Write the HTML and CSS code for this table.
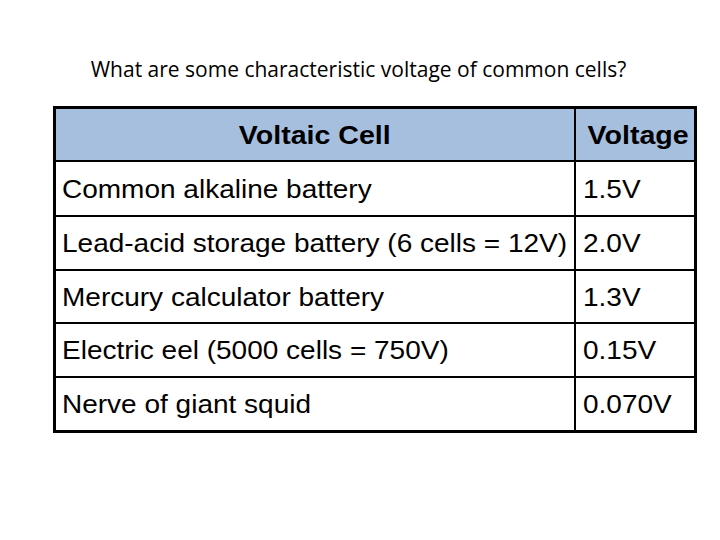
FILE: index.html
```html
<!DOCTYPE html>
<html>
<head>
<meta charset="utf-8">
<link rel="stylesheet" href="styles.css">
</head>
<body>
<main class="slide">
  <h1 class="title">What are some characteristic voltage of common cells?</h1>
  <table class="cells">
    <thead>
      <tr class="r-head">
        <th class="c-name"><span class="txt">Voltaic Cell</span></th>
        <th class="c-volt"><span class="txt">Voltage</span></th>
      </tr>
    </thead>
    <tbody>
      <tr class="r1">
        <td class="c-name"><span class="txt">Common alkaline battery</span></td>
        <td class="c-volt"><span class="txt">1.5V</span></td>
      </tr>
      <tr class="r2">
        <td class="c-name"><span class="txt">Lead-acid storage battery (6 cells = 12V)</span></td>
        <td class="c-volt"><span class="txt">2.0V</span></td>
      </tr>
      <tr class="r3">
        <td class="c-name"><span class="txt">Mercury calculator battery</span></td>
        <td class="c-volt"><span class="txt">1.3V</span></td>
      </tr>
      <tr class="r4">
        <td class="c-name"><span class="txt">Electric eel (5000 cells = 750V)</span></td>
        <td class="c-volt"><span class="txt">0.15V</span></td>
      </tr>
      <tr class="r5 last">
        <td class="c-name"><span class="txt">Nerve of giant squid</span></td>
        <td class="c-volt"><span class="txt">0.070V</span></td>
      </tr>
    </tbody>
  </table>
</main>
</body>
</html>
```

FILE: styles.css
```css
html, body {
  margin: 0;
  padding: 0;
  background: #ffffff;
}

.slide {
  width: 720px;
  height: 540px;
  padding-top: 55px;
  box-sizing: border-box;
}

.title {
  margin: 0;
  text-align: center;
  font-family: "Open Sans", "Liberation Sans", sans-serif;
  font-weight: 400;
  font-size: 21px;
  line-height: 28px;
  color: #000;
  padding-right: 3px;
}

.cells {
  margin: 23px 0 0 53px;
  width: 644px;
  border: 3px solid #000;
  border-spacing: 0;
  border-collapse: separate;
  font-family: "Liberation Sans", Arial, sans-serif;
  font-size: 25px;
  color: #000;
  table-layout: fixed;
}

.cells th,
.cells td {
  padding: 0 0 0 6px;
  vertical-align: middle;
  border-bottom: 2px solid #000;
  line-height: 28px;
  text-align: left;
  box-sizing: border-box;
  white-space: nowrap;
}

.cells .txt {
  display: inline-block;
  transform: scaleX(1.12);
  transform-origin: left center;
}

.cells .last td {
  border-bottom: 0;
}

.cells .c-name {
  width: 520px;
  border-right: 2px solid #000;
}

.cells .c-volt {
  width: 118px;
  padding-left: 7px;
}

.cells th {
  background: #a7bfde;
  font-weight: 700;
  font-size: 25.5px;
  text-align: center;
  padding: 0;
}

.cells th .txt {
  transform-origin: center center;
}

.r-head { height: 53px; }
.r1 { height: 55px; }
.r2 { height: 54px; }
.r3 { height: 53px; }
.r4 { height: 54px; }
.r5 { height: 52px; }
```
